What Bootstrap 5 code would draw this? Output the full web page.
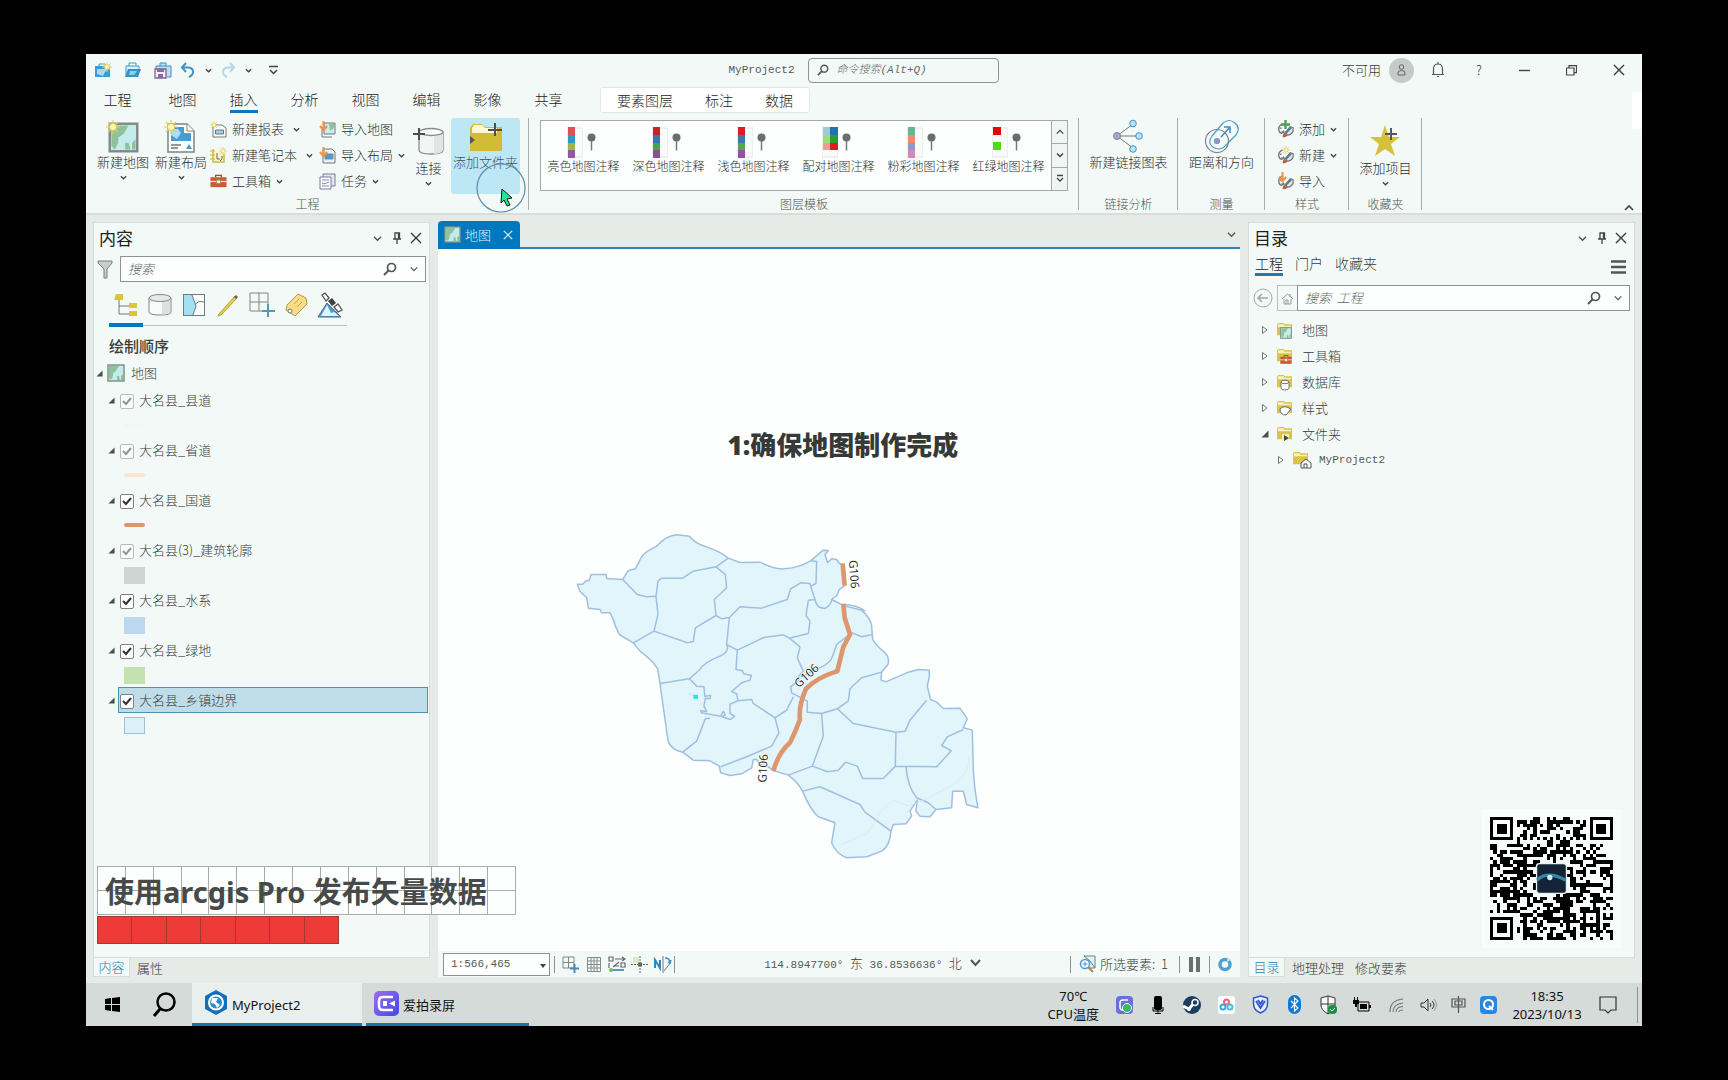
<!DOCTYPE html>
<html lang="zh-CN">
<head>
<meta charset="utf-8">
<meta name="viewport" content="width=device-width, initial-scale=1">
<title>MyProject2</title>
<link href="https://cdn.jsdelivr.net/npm/bootstrap@5.3.0/dist/css/bootstrap.min.css" rel="stylesheet">
<style>
:root{--pane:#f3f9f6;--dock:#e7ebe8;--line:#b9bfbc;--blue:#0078be;--ink:#383c3a}
body{background:#000;color:var(--ink);font-family:"Liberation Mono","Noto Sans CJK SC",monospace;font-size:13px;font-weight:300;line-height:18px;overflow:hidden}
button,input,select{font:inherit;color:inherit}
button{background:none;border:0;padding:0;line-height:18px;white-space:nowrap}
svg{display:block;flex:none}
.cjk{font-family:"Noto Sans CJK SC",sans-serif}
.mono{font-family:"Liberation Mono","Noto Sans CJK SC",monospace;font-size:11px;color:#555957}
.screen{padding:54px 86px;height:100vh}
.desktop{background:var(--pane);height:100%}
/* title bar */
.titlebar{height:32px;flex:none;padding-right:3px}
.side{flex:1 1 0}
.quick{padding-left:2px}
.winside{margin-right:-3px}
.tool{width:30px;height:24px;display:flex;align-items:center;justify-content:center}
.tool.narrow{width:20px}
.cmdbox{width:191px;height:25px;border:1px solid #8d9391;border-radius:4px;margin:0 3px 0 13px}
.bare{border:0;background:transparent;outline:0;min-width:0;padding:0;font-style:italic}
.bare::placeholder{color:#666b69;opacity:1}
.winbtn{width:47px;height:28px;display:flex;align-items:center;justify-content:center}
.winbtn.help{width:36px;margin-right:4px}
.avatar{width:25px;height:25px;border-radius:50%;background:#c6cac8}
/* ribbon */
.tabs{height:30px;flex:none;font-size:14px;padding:0 0 2px 1px;color:#1f2321}
.rtab{width:61px;height:27px;color:inherit;text-decoration:none;display:flex;align-items:center;justify-content:center}
.rtab span{border-bottom:3px solid transparent;height:25px;line-height:23px}
.rtab.on span{border-color:#1676b4}
.ctx{background:#fff;border:1px solid #e2e8e5;border-radius:3px;height:26px;margin-left:21px;padding:0 16px;gap:32px}
.ctx a{color:inherit;text-decoration:none}
.ribbon{height:99px;flex:none;border-bottom:2px solid #d9dedb;color:#2a2e2c}
.grp{position:relative;display:flex;flex-direction:column}
.grp::after{content:"";position:absolute;right:0;top:2px;bottom:3px;width:1px;background:#a9afac}
.gbody{height:80px;display:flex}
.glabel{height:18px;text-align:center;font-size:12px;color:#4e5351}
.big{width:58px;padding-top:3px;display:flex;flex-direction:column;align-items:center;white-space:nowrap}
.big svg.ic{height:34px}
.big.low{padding-top:9px}
.big .cv{margin-top:3px}
.small3{display:flex;flex-direction:column}
.row3{height:26px;display:flex;align-items:center;white-space:nowrap;gap:5px}
.hot{width:69px;background:#bde7f5;border-radius:3px;height:76px;margin-top:2px;padding-top:1px;color:#40545c}
.gallery{width:528px;height:71px;border:1px solid #a3a9a6;background:#fdfffe;margin:4px 0 0 11px}
.gitem{width:85px;font-size:12px;line-height:16px;display:flex;flex-direction:column;align-items:center;padding-top:6px;white-space:nowrap}
.gscroll{width:16px;border-left:1px solid #a3a9a6;background:#f0f4f2}
.gscroll button{flex:1;display:flex;align-items:center;justify-content:center}
.gscroll button+button{border-top:1px solid #a3a9a6}
/* docking area */
.dock{background:var(--dock);flex:1 1 0;min-height:0;padding:7px 7px 6px}
.leftpane{width:337px}
.rightpane{width:387px}
.pane{background:var(--pane);border:1px solid #d8ddda;flex:1 1 0;min-height:0}
.phead{padding:3px 4px 0 5px}
.ptitle{font-size:17px;line-height:24px;color:#1e2220;font-weight:400}
.pctl{width:19px;display:flex;justify-content:center}
.sbox{border:1px solid #8d9391;background:#fcfffd;height:26px;padding:0 7px}
.sbox .go{margin-right:13px}
.findrow{padding:6px 3px 0 3px}
.foot{height:19px;flex:none}
.foot button{padding:0 7px;height:19px;line-height:16px}
.foot .on{background:var(--pane);color:#2d84b5;border:1px solid #d8ddda;border-top:0;width:37px;padding:0 4px}
.ctabs{border-bottom:1px solid #b9bfbc;width:238px;margin:5px 0 0 15px}
.ctabs button{width:34px;height:40px;display:flex;align-items:center;justify-content:center;border-bottom:4px solid transparent;margin-bottom:-2px}
.ctabs button.on{border-color:var(--blue)}
.order{padding:8px 0 0 15px;font-size:15px;line-height:24px;font-weight:500}
.maprow{padding:6px 0 0 2px}
.maprow span{padding-left:2px}
.layers{padding-top:5px}
.layer{height:50px}
.lrow{height:26px;margin:0 1px 0 24px;display:flex;align-items:center;position:relative;border:1px solid transparent}
.lrow.sel{background:#bfdde8;border-color:#4c93b5}
.lrow .tri{position:absolute;left:-11px}
.box{appearance:none;width:14px;height:15px;border:1px solid #7c8280;border-radius:2px;margin:2px 5px 0 1px;background:#fff}
.box:checked{background:#fff url("data:image/svg+xml,%3Csvg xmlns='http://www.w3.org/2000/svg' viewBox='0 0 12 12'%3E%3Cpath d='M2 6l3 3 5-6' fill='none' stroke='%23333' stroke-width='2'/%3E%3C/svg%3E") center/12px no-repeat}
.box.dim{opacity:.5}
.sw{width:21px;height:17px;margin:4px 0 0 30px}
.ln{width:21px;height:4px;margin:10px 0 0 30px;border-radius:2px}
.viewtab{width:82px;height:28px;background:var(--blue);color:#dff3fd;border-radius:4px 4px 0 0;padding-left:6px}
.viewhead{height:27px;border-bottom:2px solid #2b83bb;flex:none}
.canvas{background:#fcfffd;position:relative;flex:1 1 0;min-height:0}
.caption1{position:absolute;left:0;right:0;top:178px;padding-left:8px;text-align:center;font:900 26px/36px "Noto Sans","Noto Sans CJK SC",sans-serif;color:#363a37}
.status{height:26px;flex:none;background:var(--pane);padding-left:5px}
.scale{width:107px;height:23px;border:1px solid #8d9391;background:#fcfffd;padding:0 7px;appearance:none;border-radius:0}
.vr1{width:1px;height:17px;background:#8d9391;flex:none}
.st{width:23px;display:flex;justify-content:center}
.seltext{margin-right:11px}
.pnav{padding:4px 8px 0 6px}
.ptab{font-size:14px;border-bottom:3px solid transparent;height:22px;line-height:19px}
.ptab.on{border-color:#2778a5;color:#222}
.cfind{padding:9px 4px 0}
.home{width:20px;border:1px solid #b9bfbc;border-right:0;height:26px;display:flex;align-items:center;justify-content:center}
.tree{padding:6px 0 0 12px}
.trow{height:26px;display:flex;align-items:center;gap:7px}
.trow svg+svg{margin-right:2px}
/* taskbar */
.taskbar{height:43px;flex:none;background:#d5dbd9;color:#111;font-family:"Noto Sans","Noto Sans CJK SC",sans-serif;font-weight:400}
.task{height:43px;border-bottom:3px solid #1676b4;display:flex;align-items:center}
.task.active{background:#e8efed}
.tray{width:34px;display:flex;justify-content:center}
.tray.slim{width:30px}
.clock{width:84px;padding-right:4px}
/* overlays */
.pointer{position:absolute;left:476px;top:163px}
.banner{position:absolute;left:97px;top:866px;width:419px}
.cells{display:grid;grid-template-columns:repeat(15,1fr);border:1px solid #a8acaa;border-width:1px 0 0 1px}
.cells i{height:24px;border:1px solid #a8acaa;border-width:0 1px 1px 0;background:rgba(253,255,254,.93)}
.bannertext{position:absolute;left:8px;top:7px;white-space:nowrap;font:700 29px/38px "Noto Sans","Noto Sans CJK SC",sans-serif;color:#474a48}
.reds{display:grid;grid-template-columns:repeat(7,1fr);width:242px;margin-top:1px;border-left:1px solid #a33935}
.reds i{height:28px;background:#ee3b38;border:1px solid #a33935;border-left:0}
.qr{position:absolute;right:107px;bottom:132px;background:#f8fcfa;padding:8px}
.edge{position:absolute;right:86px;top:92px;width:10px;height:37px;background:#fff;border-radius:3px 0 0 3px}
</style>
</head>
<body>
<svg width="0" height="0" class="position-absolute" aria-hidden="true">
<defs>
<symbol id="cv" viewBox="0 0 8 8"><path d="M1 2.500l3 3 3-3" fill="none" stroke="#444" stroke-width="1.500"/></symbol>
<symbol id="cv2" viewBox="0 0 10 10"><path d="M1 3l4 4 4-4" fill="none" stroke="#555" stroke-width="1.500"/></symbol>
<symbol id="up" viewBox="0 0 10 10"><path d="M1 7l4-4 4 4" fill="none" stroke="#444" stroke-width="1.600"/></symbol>
<symbol id="mag" viewBox="0 0 14 14"><circle cx="8.500" cy="5.500" r="4" fill="none" stroke="#555" stroke-width="1.700"/><path d="M5.500 8.500L1 13" stroke="#555" stroke-width="2"/></symbol>
<symbol id="x" viewBox="0 0 12 12"><path d="M1 1l10 10M11 1L1 11" stroke="currentColor" stroke-width="1.400"/></symbol>
<symbol id="pin" viewBox="0 0 10 12"><path d="M3 1h4.500v6H3zM6.500 1v6M1 7h8M5 7v5" fill="none" stroke="#444" stroke-width="1.300"/></symbol>
<symbol id="sun" viewBox="0 0 14 14"><path d="M7 0v14M0 7h14M2 2l10 10M12 2L2 12" stroke="#e0cf62" stroke-width="1.200"/><circle cx="7" cy="7" r="3.600" fill="#fbf7b4" stroke="#dcca55"/></symbol>
<symbol id="map" viewBox="0 0 18 18"><rect x="1" y="1" width="16" height="16" fill="#c4ecec" stroke="#7d8a86" stroke-width="1.400"/><path d="M2 2h10l-3 5-3 2 0 3-2 4-2-2zM10 12l2 0 1 4h-3zM14 16v-4l2-2v6z" fill="#8fc29a"/></symbol>
<symbol id="folder" viewBox="0 0 18 16"><path d="M1 14V2.500L2.500 1H8l1.500 1.500H17V14z" fill="#d8c543"/><path d="M2 2.500h6L9 4h7v1.500H2z" fill="#f8f2bd"/></symbol>
<symbol id="tc" viewBox="0 0 8 10"><path d="M1.500 1.500v7L6 5z" fill="none" stroke="#777"/></symbol>
<symbol id="to" viewBox="0 0 8 8"><path d="M7.500.5v7h-7z" fill="#4b4f4d"/></symbol>
<symbol id="pal" viewBox="0 0 18 18"><path d="M6 3Q1 5 2 10q1 3 3 3l2-2 1 3M4 7v1.500M5 10.500v.5" fill="none" stroke="#777" stroke-width="1.500"/><path d="M9 12l5-6 3 1v4q-2 4-6 4z" fill="#dfe8ec" stroke="#777" stroke-width="1.300"/><path d="M9 13l6-6" stroke="#567a92" stroke-width="2"/><path d="M6 17q0-4 3-4l2 2q-1 3-5 2z" fill="#b8623f"/></symbol>
<symbol id="case" viewBox="0 0 18 14"><path d="M6 3V1h6v2" fill="none" stroke="#a14d31" stroke-width="1.500"/><rect x=".5" y="3" width="17" height="10.500" fill="#cb5a37"/><path d="M0 7.500h18" stroke="#fbe6dd" stroke-width="1.200"/><rect x="7" y="6" width="4" height="3.500" fill="#fff" stroke="#994"/></symbol>
<symbol id="note" viewBox="0 0 16 30"><path d="M0 .5h16v29H0z" fill="#f9fbfa" stroke="#e1e4e2"/></symbol>
<symbol id="ball" viewBox="0 0 9 18"><circle cx="4.500" cy="4.500" r="4" fill="#6b6e6c"/><path d="M4.500 8v9.500" stroke="#777a78" stroke-width="1.500"/></symbol>
<symbol id="orarrow" viewBox="0 0 10 12"><path d="M5 0v9M1 5.500L5 10l4-4.500" fill="none" stroke="#ec9544" stroke-width="2.300"/></symbol>
</defs>
</svg>

<div class="screen">
<div class="desktop d-flex flex-column">
<header class="titlebar d-flex align-items-center">
  <div class="side quick d-flex align-items-center">
    <button class="tool" aria-label="新建"><svg width="18" height="16"><path d="M1 4h15v11H1z" fill="#3e9bd2"/><path d="M3 7h11l-3 3-2 4-6-2z" fill="#a7dbf1"/><path d="M5 4V2h6v2" fill="none" stroke="#3e9bd2"/><use href="#sun" x="8" y="0" width="10" height="10"/></svg></button>
    <button class="tool" aria-label="打开"><svg width="18" height="16"><path d="M5 4V1h7v3" fill="none" stroke="#3e9bd2"/><path d="M2 13V4h13v3" fill="#d9eff9" stroke="#3e9bd2"/><path d="M4 7h13l-3 8H1z" fill="#3690c9"/><path d="M6 9h7l-3 4H5z" fill="#8fcdea"/></svg></button>
    <button class="tool" aria-label="保存"><svg width="18" height="17"><path d="M6 4V1h6v3M2 8V4h15v11h-4" fill="#b8e1f3" stroke="#3e8fc2"/><path d="M1 7h11v9H1z" fill="#f5f0f8" stroke="#7f6396" stroke-width="1.300"/><path d="M3 7h7v3H3zM4 12h5v4H4z" fill="#8b67a6"/></svg></button>
    <button class="tool narrow" aria-label="撤消"><svg width="16" height="16"><path d="M6 1L2 5.500 6 10M2 5.500h6q5 0 5 4.500 0 3-4 5" fill="none" stroke="#3f93c9" stroke-width="2"/></svg></button>
    <button class="tool narrow" aria-label="撤消列表"><svg width="7" height="7"><use href="#cv"/></svg></button>
    <button class="tool narrow" aria-label="恢复"><svg width="16" height="16"><path d="M10 1l4 4.500L10 10M14 5.500H8q-5 0-5 4.500 0 3 4 5" fill="none" stroke="#b5d7ea" stroke-width="2"/></svg></button>
    <button class="tool narrow" aria-label="恢复列表"><svg width="7" height="7"><use href="#cv"/></svg></button>
    <button class="tool" aria-label="自定义"><svg width="9" height="11"><path d="M0 1.500h9M1 5l3.500 3.500L8 5" fill="none" stroke="#444" stroke-width="1.500"/></svg></button>
  </div>
  <span class="mono">MyProject2</span>
  <label class="cmdbox d-flex align-items-center ps-2"><svg width="12" height="12" class="me-2"><use href="#mag"/></svg><input class="bare w-100 mono" placeholder="命令搜索(Alt+Q)" aria-label="命令搜索"></label>
  <div class="side winside d-flex align-items-center justify-content-end cjk">
    <span class="me-2">不可用</span>
    <span class="avatar d-flex align-items-center justify-content-center"><svg width="9" height="12" fill="none" stroke="#666"><circle cx="4.500" cy="3" r="2.300"/><path d="M1 11V9q0-2.500 3.500-2.500T8 9v2z"/></svg></span>
    <button class="winbtn" aria-label="通知"><svg width="14" height="16"><path d="M1 12.500h12M2.500 12V7q0-5 4.500-5t4.500 5v5M6 14.500h2M7 0v2" fill="none" stroke="#555" stroke-width="1.200"/></svg></button>
    <button class="winbtn help">?</button>
    <button class="winbtn" aria-label="最小化"><svg width="11" height="3"><path d="M0 1.500h11" stroke="#444" stroke-width="1.400"/></svg></button>
    <button class="winbtn" aria-label="还原"><svg width="11" height="11"><path d="M.5 3h7.500v7H.5zM3 3V.7h7.500v7H8" fill="none" stroke="#444" stroke-width="1.200"/></svg></button>
    <button class="winbtn" aria-label="关闭"><svg width="12" height="12"><use href="#x"/></svg></button>
  </div>
</header>
<nav class="tabs d-flex align-items-center cjk">
  <a class="rtab me-1" href="#"><span>工程</span></a><a class="rtab" href="#"><span>地图</span></a><a class="rtab on" href="#"><span>插入</span></a><a class="rtab" href="#"><span>分析</span></a><a class="rtab" href="#"><span>视图</span></a><a class="rtab" href="#"><span>编辑</span></a><a class="rtab" href="#"><span>影像</span></a><a class="rtab" href="#"><span>共享</span></a>
  <div class="ctx d-flex align-items-center"><a href="#">要素图层</a><a href="#">标注</a><a href="#">数据</a></div>
</nav>
<section class="ribbon d-flex cjk">
  <div class="grp" style="width:443px">
    <div class="gbody ps-2">
      <button class="big"><svg class="ic" width="34" height="34"><use href="#map" x="2" y="3" width="31" height="31"/><use href="#sun" x="0" y="1" width="14" height="14"/></svg>新建地图<svg class="cv" width="7" height="7"><use href="#cv"/></svg></button>
      <button class="big"><svg class="ic" width="34" height="34"><path d="M4 5h19l7 7v21H4z" fill="#fcfffd" stroke="#7d8381" stroke-width="1.500"/><path d="M23 5v7h7" fill="#fff" stroke="#7d8381"/><path d="M7 8h13v6h7v8H7z" fill="#4a9bd0"/><path d="M7 10h7l3 4-4 6-6-4z" fill="#aeddf2"/><path d="M7 26h10M7 29h7" stroke="#777" stroke-width="1.300"/><path d="M25 25l3 5h-6z" fill="#4a9bd0"/><use href="#sun" x="0" y="1" width="14" height="14"/></svg>新建布局<svg class="cv" width="7" height="7"><use href="#cv"/></svg></button>
      <div class="small3" style="width:109px">
        <button class="row3"><svg width="17" height="17"><path d="M3 4h9l4 3v9H3z" fill="#f9fcfb" stroke="#777"/><path d="M5.500 9h8v4h-8z" fill="#9fd0e8" stroke="#678"/><use href="#sun" width="8" height="8"/></svg>新建报表<svg width="7" height="7" class="ms-1"><use href="#cv"/></svg></button>
        <button class="row3"><svg width="17" height="17"><path d="M3 2v13h11V7" fill="#fbf5c4" stroke="#d0b93f" stroke-width="1.500"/><path d="M0 4h5M0 8h5M0 12h5" stroke="#d0b93f"/><path d="M7 6v6h3M12 9v3l-2 2" stroke="#666" fill="none"/><use href="#sun" x="9" width="8" height="8"/></svg>新建笔记本<svg width="7" height="7" class="ms-1"><use href="#cv"/></svg></button>
        <button class="row3"><svg width="17" height="14"><use href="#case"/></svg>工具箱<svg width="7" height="7"><use href="#cv"/></svg></button>
      </div>
      <div class="small3" style="width:87px">
        <button class="row3"><svg width="17" height="17"><path d="M5 2h11v11H5z" fill="#c9ecef" stroke="#777"/><path d="M3 6v10h10" fill="none" stroke="#777"/><path d="M10 3h5v4l-4 3z" fill="#8fc29a"/><use href="#orarrow" width="9" height="11"/></svg>导入地图</button>
        <button class="row3"><svg width="17" height="17"><path d="M4 2h9l3 3v11H4z" fill="#e5f3f8" stroke="#777"/><path d="M6 7h8v5H6z" fill="#4a9bd0" stroke="#888"/><use href="#orarrow" width="9" height="11"/></svg>导入布局<svg width="7" height="7"><use href="#cv"/></svg></button>
        <button class="row3"><svg width="17" height="17"><path d="M4 1h12v12H4z" fill="#e8e6f5" stroke="#777a9a"/><path d="M1 4h11v12H1z" fill="#fff" stroke="#777a9a"/><path d="M3 7h7M3 13h7M3 10l2 1 5-2" stroke="#8a80bd" fill="none"/></svg>任务<svg width="7" height="7"><use href="#cv"/></svg></button>
      </div>
      <button class="big low" style="width:45px"><svg class="ic" width="34" height="32"><path d="M7 7v18q0 4 12 4t12-4V7" fill="#f2f5f3" stroke="#888d8b" stroke-width="1.300"/><path d="M22 10q9-1 9-3v18q0 3-9 4z" fill="#e2e5e3"/><ellipse cx="19" cy="7" rx="12" ry="3.500" fill="#fbfdfc" stroke="#888d8b" stroke-width="1.300"/><path d="M7 3v12M1 9h12" stroke="#4c504e" stroke-width="2"/></svg>连接<svg class="cv" width="7" height="7"><use href="#cv"/></svg></button>
      <button class="big hot"><svg class="ic" width="36" height="34"><path d="M2 32V9l3-4h9l3 3h17v24z" fill="#d2bb35"/><path d="M4 9l2-3h8l3 3h12v5H4z" fill="#fdf8d4"/><path d="M20 11h14M27 4v13" stroke="#4c504e" stroke-width="2"/><path d="M2 17l5 4-5 4z" fill="#555"/></svg>添加文件夹</button>
    </div>
    <div class="glabel">工程</div>
  </div>
  <div class="grp" style="width:550px">
    <div class="gbody">
      <div class="gallery d-flex">
        <button class="gitem"><svg width="34" height="31"><use href="#note" x="0" width="16" height="31"/><path d="M1 0h7v8H1z" fill="#e0524f"/><path d="M1 8h7v8H1z" fill="#2c9ac4"/><path d="M1 16h7v7H1z" fill="#a0b83f"/><path d="M1 23h7v8H1z" fill="#9359a0"/><use href="#ball" x="20" y="6" width="9" height="18"/></svg>亮色地图注释</button>
        <button class="gitem"><svg width="34" height="31"><use href="#note" x="0" width="16" height="31"/><path d="M1 0h7v8H1z" fill="#d11f26"/><path d="M1 8h7v8H1z" fill="#3878b0"/><path d="M1 16h7v7H1z" fill="#49a34a"/><path d="M1 23h7v8H1z" fill="#8b5196"/><use href="#ball" x="20" y="6" width="9" height="18"/></svg>深色地图注释</button>
        <button class="gitem"><svg width="34" height="31"><use href="#note" x="0" width="16" height="31"/><path d="M1 0h7v8H1z" fill="#da1d23"/><path d="M1 8h7v8H1z" fill="#3878b0"/><path d="M1 16h7v7H1z" fill="#4cad4a"/><path d="M1 23h7v8H1z" fill="#96529e"/><use href="#ball" x="20" y="6" width="9" height="18"/></svg>浅色地图注释</button>
        <button class="gitem"><svg width="34" height="31"><use href="#note" x="0" width="16" height="31"/><path d="M1 0h7v8H1z" fill="#9dcadc"/><path d="M8 0h8v8H8z" fill="#2272aa"/><path d="M1 8h7v8H1z" fill="#a0dc7c"/><path d="M8 8h8v8H8z" fill="#2f9a2e"/><path d="M1 16h7v7H1z" fill="#f59795"/><path d="M8 16h8v7H8z" fill="#dc1b22"/><use href="#ball" x="20" y="6" width="9" height="18"/></svg>配对地图注释</button>
        <button class="gitem"><svg width="34" height="31"><use href="#note" x="0" width="16" height="31"/><path d="M1 0h7v8H1z" fill="#62b797"/><path d="M1 8h7v8H1z" fill="#f38b63"/><path d="M1 16h7v7H1z" fill="#8e9bc6"/><path d="M1 23h7v8H1z" fill="#dc84bd"/><use href="#ball" x="20" y="6" width="9" height="18"/></svg>粉彩地图注释</button>
        <button class="gitem"><svg width="34" height="31"><use href="#note" x="0" width="16" height="31"/><path d="M1 0h8v8H1z" fill="#e50a0a"/><path d="M1 15h8v8H1z" fill="#4edb17"/><use href="#ball" x="20" y="6" width="9" height="18"/></svg>红绿地图注释</button>
        <div class="gscroll d-flex flex-column"><button aria-label="上"><svg width="8" height="8"><use href="#up"/></svg></button><button aria-label="下"><svg width="8" height="8"><use href="#cv"/></svg></button><button aria-label="更多"><svg width="8" height="9"><path d="M1 1.500h6M1 4l3 3 3-3" fill="none" stroke="#444" stroke-width="1.300"/></svg></button></div>
      </div>
    </div>
    <div class="glabel">图层模板</div>
  </div>
  <div class="grp" style="width:99px"><div class="gbody justify-content-center"><button class="big"><svg class="ic" width="34" height="34" fill="#b7e4f6" stroke="#3f93c9"><path d="M5 17L21 5M5 17h21M5 17l16 12" stroke="#777"/><circle cx="5" cy="17" r="3.500" fill="#aaa0cc" stroke="#8880aa"/><circle cx="21" cy="4.500" r="3.300"/><circle cx="27" cy="17" r="3.300"/><circle cx="21" cy="30" r="3.300"/></svg>新建链接图表</button></div><div class="glabel">链接分析</div></div>
  <div class="grp" style="width:87px"><div class="gbody justify-content-center"><button class="big"><svg class="ic" width="36" height="34" fill="none" stroke="#7e9ab5" stroke-width="1.200"><circle cx="13" cy="22" r="11.500" stroke="#7d8288"/><circle cx="13" cy="22" r="2.500" fill="#9b92c4"/><path d="M8 17L19 4q6-5 12 0t1 12L20 28q-5 4-11 0t-1-11z" stroke="#4b9bcd"/><path d="M17 18l9-10M20 8h6v6" stroke="#3f8dc0" stroke-width="1.500"/></svg>距离和方向</button></div><div class="glabel">测量</div></div>
  <div class="grp" style="width:84px"><div class="gbody"><div class="small3 ps-2 ms-1">
    <button class="row3"><svg width="17" height="18"><use href="#pal" y="1" width="17" height="17"/><path d="M8.500 0v9M4 4.500h9" stroke="#4e9d57" stroke-width="2.300"/></svg>添加<svg width="7" height="7"><use href="#cv"/></svg></button>
    <button class="row3"><svg width="17" height="18"><use href="#pal" y="1" width="17" height="17"/><use href="#sun" x="5" width="8" height="8"/></svg>新建<svg width="7" height="7"><use href="#cv"/></svg></button>
    <button class="row3"><svg width="17" height="18"><use href="#pal" y="1" width="17" height="17"/><use href="#orarrow" x="1" width="9" height="11"/></svg>导入</button>
  </div></div><div class="glabel">样式</div></div>
  <div class="grp" style="width:73px"><div class="gbody justify-content-center"><button class="big low"><svg class="ic" width="36" height="32"><path d="M17 0l4 12h11l-9 7 4 12-10-7-10 7 4-12-9-7h11z" fill="#d6c23a"/><path d="M23 3v12M17 9h12" stroke="#55595a" stroke-width="2"/></svg>添加项目<svg class="cv" width="7" height="7"><use href="#cv"/></svg></button></div><div class="glabel">收藏夹</div></div>
  <button class="ms-auto align-self-end me-2 mb-0" aria-label="折叠功能区"><svg width="10" height="10"><use href="#up"/></svg></button>
</section>

<main class="dock d-flex gap-2">
  <aside class="leftpane d-flex flex-column cjk">
    <div class="pane">
      <div class="phead d-flex align-items-center"><span class="ptitle flex-grow-1">内容</span><button class="pctl" aria-label="菜单"><svg width="9" height="9"><use href="#cv2"/></svg></button><button class="pctl" aria-label="固定"><svg width="10" height="12"><use href="#pin"/></svg></button><button class="pctl" aria-label="关闭"><svg width="12" height="12"><use href="#x"/></svg></button></div>
      <div class="findrow d-flex align-items-center"><button aria-label="过滤" style="width:23px"><svg width="16" height="19"><path d="M1 1h14v2L10 9v9H7V9L1 3z" fill="#c9cdcb" stroke="#7a7f7c"/></svg></button><label class="sbox d-flex align-items-center flex-grow-1"><input class="bare flex-grow-1" placeholder="搜索" aria-label="搜索"><svg width="14" height="14" class="go"><use href="#mag"/></svg><svg width="8" height="8"><use href="#cv2"/></svg></label></div>
      <div class="ctabs d-flex">
        <button class="on" aria-label="按绘制顺序"><svg width="24" height="24"><path d="M5 6v15h10M5 13h10" fill="none" stroke="#777"/><path d="M2 1h7v6H0zM15 10h8v5h-8zM15 18h8v5h-8z" fill="#d9c63f"/></svg></button>
        <button aria-label="按数据源"><svg width="24" height="24"><path d="M1 5v14q0 3 11 3t11-3V5" fill="#fafcfb" stroke="#848987"/><path d="M14 8q8-.5 8-3v14q0 2-8 2.500z" fill="#dde0de"/><ellipse cx="12" cy="5" rx="11" ry="3.500" fill="#e7eae8" stroke="#848987"/></svg></button>
        <button aria-label="按选择"><svg width="24" height="24"><rect x="1.500" y="1.500" width="21" height="21" fill="#fafcfb" stroke="#6f7b80"/><path d="M2 2h8l4 11-3 9H2z" fill="#a5dff2"/><path d="M10 2l4 11-3 9M13 12q3-5 9-3" fill="none" stroke="#6f7b80"/></svg></button>
        <button aria-label="按编辑"><svg width="24" height="24"><path d="M3 21L19 3l2 2L5 22l-3 1z" fill="#e3d04c" stroke="#b5a43c"/><path d="M18 4l2-2 2 2-2 2z" fill="#7a5b52"/></svg></button>
        <button aria-label="按捕捉"><svg width="26" height="26"><path d="M1 1h18v18H1zM10 1v18M1 10h18" fill="none" stroke="#808583"/><path d="M19 12v13M13 19h13" stroke="#5a96b5" stroke-width="2"/></svg></button>
        <button aria-label="按标注"><svg width="24" height="24"><path d="M3 12L14 1l8 4 1 6-12 12-9-6z" fill="#f8dc86" stroke="#b39544"/><path d="M10 11l5-5M13 14l5-5" stroke="#c9a64b"/><circle cx="6" cy="18" r="2" fill="#fff" stroke="#777"/></svg></button>
        <button aria-label="按感知"><svg width="26" height="26"><path d="M1 25L10 11l14 14z" fill="#4c9dd0" stroke="#567"/><path d="M5 22l5-9 4 8 3-1 5 4H4z" fill="#dff3fa"/><path d="M5 3l3-2 4 5-3 3zM17 15l4-3 4 6-4 2z" fill="#fff" stroke="#555" stroke-width="1.300"/><path d="M11 9l4-3 4 5-4 3z" fill="#3e4240"/></svg></button>
      </div>
      <div class="order">绘制顺序</div>
      <div class="maprow d-flex align-items-center"><svg width="7" height="7"><use href="#to"/></svg><svg width="18" height="18" class="mx-1"><use href="#map"/></svg><span>地图</span></div>
      <div class="layers">
      <div class="layer"><label class="lrow"><svg class="tri" width="7" height="7"><use href="#to"/></svg><input type="checkbox" class="box dim" checked>大名县_县道</label><div class="ln" style="background:#f3f7f2"></div></div>
      <div class="layer"><label class="lrow"><svg class="tri" width="7" height="7"><use href="#to"/></svg><input type="checkbox" class="box dim" checked>大名县_省道</label><div class="ln" style="background:#f9e5d1"></div></div>
      <div class="layer"><label class="lrow"><svg class="tri" width="7" height="7"><use href="#to"/></svg><input type="checkbox" class="box" checked>大名县_国道</label><div class="ln" style="background:#de966f"></div></div>
      <div class="layer"><label class="lrow"><svg class="tri" width="7" height="7"><use href="#to"/></svg><input type="checkbox" class="box dim" checked>大名县(3)_建筑轮廓</label><div class="sw" style="background:#d0d5d2"></div></div>
      <div class="layer"><label class="lrow"><svg class="tri" width="7" height="7"><use href="#to"/></svg><input type="checkbox" class="box" checked>大名县_水系</label><div class="sw" style="background:#bcd7ee"></div></div>
      <div class="layer"><label class="lrow"><svg class="tri" width="7" height="7"><use href="#to"/></svg><input type="checkbox" class="box" checked>大名县_绿地</label><div class="sw" style="background:#c3e2b0"></div></div>
      <div class="layer"><label class="lrow sel"><svg class="tri" width="7" height="7"><use href="#to"/></svg><input type="checkbox" class="box" checked>大名县_乡镇边界</label><div class="sw" style="background:#dcf1f9;border:1px solid #a3bfdc"></div></div>
      </div>
    </div>
    <div class="foot d-flex"><button class="on">内容</button><button>属性</button></div>
  </aside>

  <section class="flex-grow-1 d-flex flex-column cjk">
    <div class="viewhead d-flex align-items-center"><div class="viewtab d-flex align-items-center"><svg width="17" height="17" class="me-1"><use href="#map"/></svg>地图<button class="ms-2 ps-1" aria-label="关闭地图"><svg width="10" height="10"><use href="#x"/></svg></button></div><button class="ms-auto me-1" aria-label="视图列表"><svg width="9" height="9"><use href="#cv2"/></svg></button></div>
    <div class="canvas">
      <svg class="w-100 h-100" viewBox="438 250 802 701" role="img" aria-label="地图">
      <g transform="translate(560 510) scale(.3333)" fill="none" stroke="#a0bfe0" stroke-width="4.500" stroke-linejoin="round">
        <path fill="#e1f5fb" d="M52 224L68 224 76 215 88 212 93 195 138 195 140 207 188 210 204 184 226 178 236 160Q245 132 275 118L290 110Q320 78 350 76L388 80Q405 98 420 105L465 122Q485 130 505 146L540 159 600 158Q645 180 670 178 715 176 752 154L790 122 805 123 795 135 803 160 815 148 830 150 838 162 848 165 856 228 838 240 831 258 815 270 850 288 905 302Q935 330 935 350L938 390Q950 410 975 430 990 445 984 465L965 488 963 512 978 517 1040 490 1075 480 1108 482 1108 502 1102 530 1112 570 1130 578 1150 597 1200 596 1222 628 1210 655 1237 662 1240 780 1245 840 1254 895 1220 885 1210 845 1178 845 1175 895 1128 900 1110 922 1080 920 1068 905 1072 872 1050 905 1055 920 1038 943 1000 945 993 965Q990 1010 965 1025L920 1042 860 1045Q830 1035 815 1000L825 940 775 922Q750 900 728 845 710 815 685 797L640 783 625 772 600 765 590 750 580 750 575 775 545 793 510 798 482 790 478 770 450 754 400 752 368 728Q325 720 322 680L300 522 293 478Q280 455 240 425L220 400 178 375Q165 350 160 330L150 310 125 310 120 300 85 296 80 265 60 245Z"/>
        <path d="M188 210L232 255 260 262 288 260 294 215 305 206 368 206 400 185 468 172 505 146M288 260L294 315 282 365 220 400M282 365L382 400 400 396 406 355 468 318 463 270 500 235 496 195 468 172M468 318L486 328 508 324 540 292 605 296 682 270 692 238 722 220 750 222 752 230 768 222 770 156 752 154M508 324L500 405 532 422 612 384 670 376 688 386 745 372 750 335 738 318 745 272 765 270 752 230M765 270Q770 297 795 297 815 285 815 270M500 405Q510 425 480 440 430 460 420 480L388 508 300 522M532 422L528 480 548 484 550 492 574 498 570 512 545 520 515 546 530 553 534 574 575 570 580 582 645 625 680 602 700 562M388 508L410 530 432 532 434 560 452 558 450 568 436 566 432 590 440 606 422 604 424 610 482 620 490 606 496 616 486 622 512 630 524 620 510 612 510 584 534 574M450 626L436 628 410 695 368 728M645 625L657 670 635 710 560 742 482 772M688 386L720 412 712 445 730 485 716 500 716 512 692 532 695 550 742 575 742 608 785 612 832 598 865 574 870 538 905 505 965 488M734 497L780 475Q812 460 818 440L830 405 875 370 905 382 938 375M785 612L790 680 757 770 685 797M832 598L880 642 1008 668 1036 665 1050 632 1100 572M1008 668L1006 770 970 807 908 807 892 770 857 758 835 782 803 787 757 770M1006 770L1130 772 1174 724 1145 708 1162 682 1210 660M1038 770Q1042 830 1070 865L1105 880 1128 900M728 845L780 832 900 885 915 908 993 965M850 285Q890 285 915 305"/>
        <path stroke="#d5e9e9" stroke-width="2" d="M845 1005L925 970 962 905 1000 872 1045 890 1100 868 1180 825Q1230 790 1228 740"/>
        <path stroke="#de966f" stroke-width="14" d="M848 162L854 228M850 283L854 325 870 375 850 412 832 485Q770 505 738 538 715 590 720 630 705 670 690 700 655 730 640 785"/>
        <path d="M385 552l22 10" stroke="#d5cfd9" stroke-width="2"/><rect x="400" y="556" width="14" height="12" fill="#23e8d8" stroke="none"/>
        <g fill="#222" stroke="#fff" stroke-width="5" paint-order="stroke" font-family="Open Sans,sans-serif" font-size="35" font-weight="400"><text transform="translate(867 152) rotate(86)">G106</text><text transform="translate(716 536) rotate(-42)">G106</text><text transform="translate(619 820) rotate(-87)">G106</text></g>
      </g></svg>
      <div class="caption1">1:确保地图制作完成</div>
    </div>
    <div class="status d-flex align-items-center">
      <div class="position-relative"><select class="scale mono" aria-label="比例尺"><option>1:566,465</option></select><svg width="6" height="5" class="position-absolute end-0 top-50 me-1"><path d="M0 0h6L3 4z" fill="#444"/></svg></div>
      <i class="vr1 ms-1 me-1"></i>
      <button class="st" aria-label="捕捉"><svg width="17" height="17"><path d="M1 1h11v11H1zM6.500 1v11M1 6.500h11" fill="none" stroke="#808583"/><path d="M12.500 8v9M8 12.500h9" stroke="#4a8cb5" stroke-width="2"/></svg></button>
      <button class="st" aria-label="格网"><svg width="14" height="15"><path d="M.5.5h13v14H.5zM4 0v15M7 0v15M10 0v15M0 4h14M0 7.500h14M0 11h14" fill="none" stroke="#858a88"/></svg></button>
      <button class="st" aria-label="约束"><svg width="18" height="16"><path d="M1 1h4v4H1zM13 7h4v4h-4zM7 3h10M14 1l3 2-3 2M5 11l6-5M1 7v5M7 10h4" fill="none" stroke="#62676a" stroke-width="1.200"/><path d="M3 14h13" stroke="#4a9bd0" stroke-width="2"/><circle cx="3" cy="14" r="2" fill="#7bb866"/></svg></button>
      <button class="st" aria-label="校正"><svg width="18" height="17"><path d="M2 1h6v6H2z" fill="#dde8c9"/><path d="M9 0v17M0 8.500h18" stroke="#666" stroke-dasharray="2 1"/><path d="M7 6.500h4v4H7z" fill="#666"/></svg></button>
      <button class="st" aria-label="指北"><svg width="20" height="17"><path d="M2 12V4l5 8V4" fill="none" stroke="#2e86c0" stroke-width="2"/><path d="M10 0v17M11 15l7-9" stroke="#777"/><path d="M12 2q5 0 5 5l-2-1M17 7l1-3" stroke="#3f93c9" fill="none" stroke-width="1.500"/></svg></button>
      <i class="vr1"></i>
      <div class="flex-grow-1 text-center"><span class="mono">114.8947700° </span>东<span class="mono"> 36.8536636° </span>北<button class="ms-2" aria-label="坐标格式"><svg width="11" height="10"><path d="M1 2l4.500 5L10 2" fill="none" stroke="#555" stroke-width="2"/></svg></button></div>
      <i class="vr1 me-2"></i>
      <svg width="17" height="18" class="me-1"><path d="M5 1h11v12H9M5 1l6 5 5 7" fill="#dff0f5" stroke="#68808a"/><circle cx="6" cy="9" r="4.500" fill="#fff" stroke="#4a9bd0" stroke-width="1.500"/><path d="M3.500 9h5M6 6.500v5" stroke="#4a9bd0"/><path d="M9 12l5 5" stroke="#b08a4b" stroke-width="2"/></svg>
      <span class="seltext">所选要素:&nbsp; 1</span>
      <i class="vr1 me-2"></i><button aria-label="暂停"><svg width="13" height="15"><path d="M1 0h4v15H1zM8 0h4v15H8z" fill="#6b706d"/></svg></button><i class="vr1 ms-2 me-2"></i>
      <button class="me-2" aria-label="刷新"><svg width="14" height="15"><circle cx="7" cy="7.500" r="5" fill="none" stroke="#4ea2d2" stroke-width="3.500"/><path d="M9 0l4 3-4 2z" fill="#b6dcef"/></svg></button>
    </div>
  </section>

  <aside class="rightpane d-flex flex-column cjk">
    <div class="pane">
      <div class="phead d-flex align-items-center"><span class="ptitle flex-grow-1">目录</span><button class="pctl" aria-label="菜单"><svg width="9" height="9"><use href="#cv2"/></svg></button><button class="pctl" aria-label="固定"><svg width="10" height="12"><use href="#pin"/></svg></button><button class="pctl" aria-label="关闭"><svg width="12" height="12"><use href="#x"/></svg></button></div>
      <div class="pnav d-flex align-items-center"><button class="ptab on me-2">工程</button><button class="ptab ms-1 me-2">门户</button><button class="ptab ms-1">收藏夹</button><button class="ms-auto pt-1" aria-label="菜单"><svg width="15" height="14"><path d="M0 1.500h15M0 7h15M0 12.500h15" stroke="#555" stroke-width="2.600"/></svg></button></div>
      <div class="cfind d-flex align-items-center"><button class="me-1" aria-label="返回"><svg width="20" height="20" fill="none" stroke="#a5aba8"><circle cx="10" cy="10" r="9"/><path d="M15 10H5M9 6l-4 4 4 4" stroke-width="1.600"/></svg></button><button class="home" aria-label="主页"><svg width="13" height="13"><path d="M1 7l5.500-5L12 7M3 7v5h7V7M9 2v3M5 12V8h2v4" fill="none" stroke="#999e9b"/></svg></button><label class="sbox d-flex align-items-center flex-grow-1"><input class="bare flex-grow-1" placeholder="搜索&nbsp; 工程" aria-label="搜索 工程"><svg width="14" height="14" class="go"><use href="#mag"/></svg><svg width="8" height="8"><use href="#cv2"/></svg></label></div>
      <div class="tree">
        <div class="trow"><svg width="8" height="10"><use href="#tc"/></svg><svg width="17" height="17"><use href="#folder" width="17" height="15"/><use href="#map" x="4" y="5" width="12" height="12"/></svg>地图</div>
        <div class="trow"><svg width="8" height="10"><use href="#tc"/></svg><svg width="17" height="17"><use href="#folder" width="17" height="15"/><use href="#case" x="4" y="6" width="12" height="11"/></svg>工具箱</div>
        <div class="trow"><svg width="8" height="10"><use href="#tc"/></svg><svg width="17" height="17"><use href="#folder" width="17" height="15"/><path d="M5 8v6q0 2 4 2t4-2V8" fill="#fff" stroke="#777"/><ellipse cx="9" cy="8" rx="4" ry="1.700" fill="#fff" stroke="#777"/></svg>数据库</div>
        <div class="trow"><svg width="8" height="10"><use href="#tc"/></svg><svg width="17" height="17"><use href="#folder" width="17" height="15"/><path d="M4 9q4-4 9-1l2 1-5 6q-6 0-6-6z" fill="#fff" stroke="#666"/></svg>样式</div>
        <div class="trow"><svg width="8" height="8"><use href="#to"/></svg><svg width="17" height="17"><use href="#folder" width="17" height="15"/><path d="M6 8h7v7H6z" fill="#f6f0bd"/><path d="M8 9l5 3-5 3z" fill="#444"/></svg>文件夹</div>
        <div class="trow ps-3"><svg width="8" height="10"><use href="#tc"/></svg><svg width="20" height="18" class="me-0"><use href="#folder" width="17" height="15"/><path d="M9 12l5-4 5 4v5H9zM12 17v-4h3v4" fill="#f7faf8" stroke="#555"/></svg><span class="mono">MyProject2</span></div>
      </div>
    </div>
    <div class="foot d-flex"><button class="on">目录</button><button>地理处理</button><button class="ps-1">修改要素</button></div>
  </aside>
</main>

<footer class="taskbar d-flex align-items-center">
  <button aria-label="开始" style="width:52px"><svg width="15" height="15" class="mx-auto"><path d="M0 2l6-1v6H0zM7 1l8-1v7H7zM0 8h6v6l-6-1zM7 8h8v7l-8-1z"/></svg></button>
  <button aria-label="搜索" style="width:54px"><svg width="26" height="26" class="mx-auto"><circle cx="14" cy="10" r="8.500" fill="none" stroke="#000" stroke-width="2.500"/><path d="M8 17l-6 7" stroke="#000" stroke-width="3"/></svg></button>
  <button class="task active ps-2" style="width:170px"><svg width="24" height="26" class="ms-1"><path d="M12 0l11 6v13l-11 6-11-6V6z" fill="#1370b8"/><circle cx="12" cy="12.500" r="7" fill="#2a8ccc" stroke="#fff" stroke-width="2"/><path d="M8 8l6 0-2 4 4 3-3 3-2-4-4-1z" fill="#fff"/></svg><span class="ps-1 pt-1">MyProject2</span></button>
  <button class="task ps-2 ms-1" style="width:163px"><svg width="25" height="25"><defs><linearGradient id="pg" x2="1" y2="1"><stop stop-color="#9c6ef0"/><stop offset="1" stop-color="#4347e8"/></linearGradient></defs><rect width="25" height="25" rx="5" fill="url(#pg)"/><path d="M19 6H9Q5 6 5 10v5q0 4 4 4h10" fill="none" stroke="#fff" stroke-width="2.500"/><path d="M9 10h4v5H9zM15 12.500l6-3v6z" fill="#fff"/></svg><span class="ps-1 pt-1">爱拍录屏</span></button>
  <div class="ms-auto d-flex align-items-center">
    <div class="text-center me-2">70℃<br>CPU温度</div>
    <span class="tray"><svg width="17" height="18"><rect width="17" height="18" rx="4" fill="#6a6fdc"/><path d="M12 4H7Q4 4 4 7v4q0 3 3 3" fill="none" stroke="#fff" stroke-width="1.500"/><circle cx="11" cy="12" r="4.500" fill="#35b96b" stroke="#fff"/></svg></span>
    <span class="tray"><svg width="12" height="18"><rect x="2" width="8" height="14" rx="2"/><path d="M1 11v4h10v-4M6 14v3M3 17.500h6" stroke="#000" fill="none"/></svg></span>
    <span class="tray"><svg width="18" height="18"><circle cx="9" cy="9" r="9" fill="#1b3e63"/><path d="M0 10l6 3 5-6" stroke="#fff" stroke-width="3" fill="none"/><circle cx="12" cy="6.500" r="3" fill="#1b3e63" stroke="#fff" stroke-width="1.500"/><circle cx="6" cy="13" r="2" fill="#fff"/></svg></span>
    <span class="tray"><svg width="17" height="18"><rect width="17" height="18" rx="3" fill="#fcfefe"/><g fill="none" stroke-width="2"><circle cx="8.500" cy="6" r="2.500" stroke="#e8647c"/><circle cx="5" cy="11" r="2.500" stroke="#38a9d8"/><circle cx="12" cy="11" r="2.500" stroke="#49c0dc"/></g></svg></span>
    <span class="tray"><svg width="17" height="19"><path d="M8.500 1l7 2v6q0 6-7 9-7-3-7-9V3z" fill="#e9eef9" stroke="#3353cf" stroke-width="1.500"/><path d="M4 6l4.500 7L13 6M6 5l2.500 4L11 5" fill="none" stroke="#3353cf" stroke-width="1.800"/></svg></span>
    <span class="tray"><svg width="13" height="19"><rect width="13" height="19" rx="6.500" fill="#1377d4"/><path d="M3 6l7 7-3.500 3V3L10 6l-7 7" fill="none" stroke="#fff" stroke-width="1.200"/></svg></span>
    <span class="tray"><svg width="18" height="20"><path d="M9 1l7 2v7q0 5-7 9-7-4-7-9V3z" fill="#fafcfb" stroke="#333"/><path d="M9 1v18M2 9h14" stroke="#333"/><rect x="9" y="10" width="9" height="9" rx="4" fill="#188f43"/><path d="M11 14l2 2 3-3" stroke="#fff" fill="none"/></svg></span>
    <span class="tray"><svg width="18" height="16"><path d="M5 5h11v9H5z" fill="none" stroke="#000"/><path d="M7 7h7v5H7zM16 8h2v3h-2zM0 3h6v4H4v3H2V7H0zM1 0h1v3H1zM4 0h1v3H4z"/></svg></span>
    <span class="tray"><svg width="15" height="16" fill="none" stroke="#777" stroke-width="1.200"><path d="M1 15Q1 3 14 2M4 15q0-8 10-9M7 15q0-5 7-5.500M10 15q0-2 4-2"/></svg></span>
    <span class="tray slim"><svg width="17" height="14" fill="none" stroke="#333"><path d="M1 5h3l4-4v12L4 9H1zM10 5q2 2 0 4M12 3q4 4 0 8" /><path d="M14 1q5 6 0 12" stroke="#999"/></svg></span>
    <span class="tray slim"><svg width="15" height="17" fill="none" stroke="#555" stroke-width="1.200"><path d="M1 3h13v8H1zM4 5h7v4H4zM7.500 0v17"/></svg></span>
    <span class="tray slim"><svg width="17" height="18"><rect width="17" height="18" rx="4" fill="#2c86e0"/><circle cx="8.500" cy="8.500" r="4.500" fill="none" stroke="#fff" stroke-width="2"/><path d="M9 10l4 4" stroke="#fff" stroke-width="2"/></svg></span>
    <div class="clock text-center ms-1">18:35<br>2023/10/13</div>
    <button class="ms-2 me-1" aria-label="操作中心"><svg width="18" height="18"><path d="M1 1h16v13h-5l-3 3-3-3H1z" fill="none" stroke="#333" stroke-width="1.200"/></svg></button>
    <i class="vr1 ms-3 me-1 align-self-stretch h-auto"></i>
  </div>
</footer>
</div>
</div>

<div class="edge"></div>
<svg class="pointer" width="51" height="51"><circle cx="25" cy="25" r="24" fill="none" stroke="#5b8dab" stroke-width="1.200"/><path d="M26 26l10 9-5 1 3 6-3 1-3-6-3 3z" fill="#18ec9a" stroke="#111"/></svg>
<div class="banner"><div class="cells" id="cells"></div><div class="bannertext">使用arcgis Pro 发布矢量数据</div><div class="reds"><i></i><i></i><i></i><i></i><i></i><i></i><i></i></div></div>
<div class="qr"><svg id="qr" width="123" height="123" viewBox="0 0 37 37" shape-rendering="crispEdges"></svg></div>

<script src="https://cdn.jsdelivr.net/npm/bootstrap@5.3.0/dist/js/bootstrap.bundle.min.js"></script>
<script>
document.getElementById('cells').innerHTML = '<i></i>'.repeat(30);
// Version 5 code: three finders, one alignment mark, timing lines, scattered data modules
const N = 37;
let seed = 7, d = '';
const rnd = () => (seed = (seed * 16807) % 2147483647) / 2147483647;
const ring = (x, y, cx, cy, r) => { const k = Math.max(Math.abs(x - cx), Math.abs(y - cy)); return k > r ? -1 : k; };
for (let y = 0; y < N; y++) for (let x = 0; x < N; x++) {
  let on = rnd() < 0.54;
  if (x === 6 || y === 6) on = (x + y) % 2 === 0;
  const a = ring(x, y, 30, 30, 2);
  if (a >= 0) on = a !== 1;
  for (const [cx, cy] of [[3, 3], [33, 3], [3, 33]]) {
    const k = ring(x, y, cx, cy, 4);
    if (k >= 0) on = k === 3 || k < 2;
  }
  if (on) d += `M${x} ${y}h1v1h-1z`;
}
document.getElementById('qr').innerHTML = `<path d="${d}"/>
<g shape-rendering="auto"><rect x="13.800" y="13.800" width="9.400" height="9.400" rx="1" fill="#e9f0f0"/><rect x="14.200" y="14.200" width="8.600" height="8.600" rx=".7" fill="#142335"/>
<path d="M14.200 19q3-3 8.600 0" stroke="#3387ab" stroke-width="1" fill="none"/><circle cx="18" cy="18.200" r=".8" fill="#c9eef8"/></g>`;
</script>
</body>
</html>
